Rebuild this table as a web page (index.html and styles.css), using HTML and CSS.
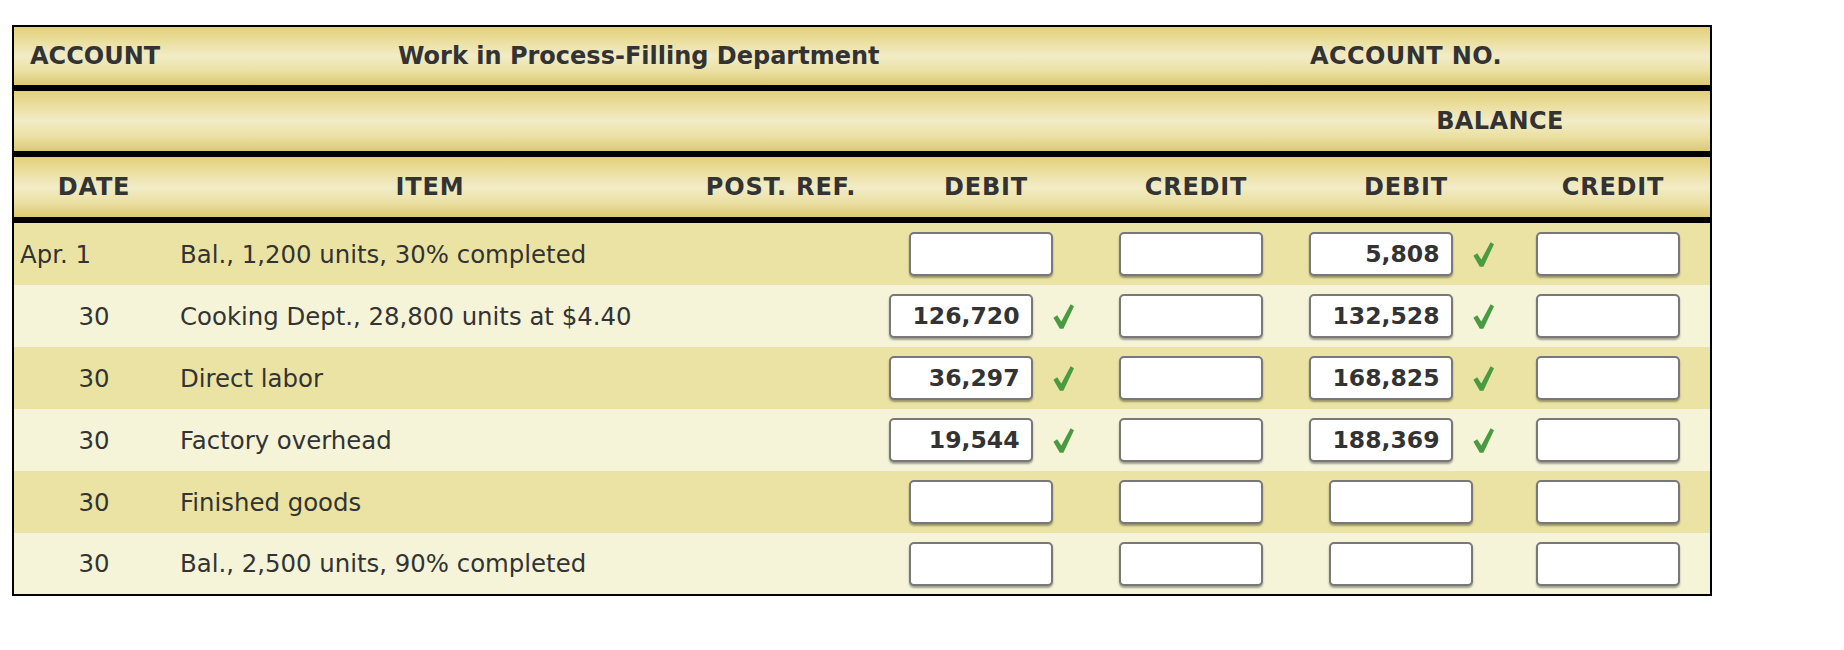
FILE: index.html
```html
<!DOCTYPE html>
<html lang="en">
<head>
<meta charset="utf-8">
<title>Work in Process-Filling Department</title>
<link rel="stylesheet" href="styles.css">
</head>
<body>
<div class="page">
  <div class="ledger">
    <div class="hrow hrow-account">
      <div class="hcell hcell-label">ACCOUNT</div>
      <div class="hcell hcell-title">Work in Process-Filling Department</div>
      <div class="hcell hcell-no caps">ACCOUNT NO.</div>
      <div class="hcell"></div>
    </div>
    <div class="hrow hrow-balance">
      <div class="hcell"></div>
      <div class="hcell hcell-balance caps">BALANCE</div>
    </div>
    <div class="hrow cols">
      <div class="hcell center colhead">DATE</div>
      <div class="hcell center colhead">ITEM</div>
      <div class="hcell center colhead">POST. REF.</div>
      <div class="hcell center colhead money">DEBIT</div>
      <div class="hcell center colhead money">CREDIT</div>
      <div class="hcell center colhead money">DEBIT</div>
      <div class="hcell center colhead money">CREDIT</div>
    </div>

    <div class="row cols dark">
      <div class="date date-first">Apr. 1</div>
      <div class="item">Bal., 1,200 units, 30% completed</div>
      <div class="ref"></div>
      <div class="amt"><div class="box"></div></div>
      <div class="amt"><div class="box"></div></div>
      <div class="amt"><div class="box">5,808</div><svg class="check" viewBox="0 0 21 25"><path d="M0.4 13.8 L4.2 11.3 L8.3 17.4 L17.6 0.3 L21 2.3 L10.4 24.7 L6.8 24.7 Z"/></svg></div>
      <div class="amt"><div class="box"></div></div>
    </div>
    <div class="row cols light">
      <div class="date">30</div>
      <div class="item">Cooking Dept., 28,800 units at $4.40</div>
      <div class="ref"></div>
      <div class="amt"><div class="box">126,720</div><svg class="check" viewBox="0 0 21 25"><path d="M0.4 13.8 L4.2 11.3 L8.3 17.4 L17.6 0.3 L21 2.3 L10.4 24.7 L6.8 24.7 Z"/></svg></div>
      <div class="amt"><div class="box"></div></div>
      <div class="amt"><div class="box">132,528</div><svg class="check" viewBox="0 0 21 25"><path d="M0.4 13.8 L4.2 11.3 L8.3 17.4 L17.6 0.3 L21 2.3 L10.4 24.7 L6.8 24.7 Z"/></svg></div>
      <div class="amt"><div class="box"></div></div>
    </div>
    <div class="row cols dark">
      <div class="date">30</div>
      <div class="item">Direct labor</div>
      <div class="ref"></div>
      <div class="amt"><div class="box">36,297</div><svg class="check" viewBox="0 0 21 25"><path d="M0.4 13.8 L4.2 11.3 L8.3 17.4 L17.6 0.3 L21 2.3 L10.4 24.7 L6.8 24.7 Z"/></svg></div>
      <div class="amt"><div class="box"></div></div>
      <div class="amt"><div class="box">168,825</div><svg class="check" viewBox="0 0 21 25"><path d="M0.4 13.8 L4.2 11.3 L8.3 17.4 L17.6 0.3 L21 2.3 L10.4 24.7 L6.8 24.7 Z"/></svg></div>
      <div class="amt"><div class="box"></div></div>
    </div>
    <div class="row cols light">
      <div class="date">30</div>
      <div class="item">Factory overhead</div>
      <div class="ref"></div>
      <div class="amt"><div class="box">19,544</div><svg class="check" viewBox="0 0 21 25"><path d="M0.4 13.8 L4.2 11.3 L8.3 17.4 L17.6 0.3 L21 2.3 L10.4 24.7 L6.8 24.7 Z"/></svg></div>
      <div class="amt"><div class="box"></div></div>
      <div class="amt"><div class="box">188,369</div><svg class="check" viewBox="0 0 21 25"><path d="M0.4 13.8 L4.2 11.3 L8.3 17.4 L17.6 0.3 L21 2.3 L10.4 24.7 L6.8 24.7 Z"/></svg></div>
      <div class="amt"><div class="box"></div></div>
    </div>
    <div class="row cols dark">
      <div class="date">30</div>
      <div class="item">Finished goods</div>
      <div class="ref"></div>
      <div class="amt"><div class="box"></div></div>
      <div class="amt"><div class="box"></div></div>
      <div class="amt"><div class="box"></div></div>
      <div class="amt"><div class="box"></div></div>
    </div>
    <div class="row cols light last">
      <div class="date">30</div>
      <div class="item">Bal., 2,500 units, 90% completed</div>
      <div class="ref"></div>
      <div class="amt"><div class="box"></div></div>
      <div class="amt"><div class="box"></div></div>
      <div class="amt"><div class="box"></div></div>
      <div class="amt"><div class="box"></div></div>
    </div>
  </div>
</div>
</body>
</html>
```

FILE: styles.css
```css
html, body {
  margin: 0;
  padding: 0;
  background: #ffffff;
}

.page {
  padding: 25px 0 0 12px;
  font-family: "DejaVu Sans", Verdana, sans-serif;
  color: #333333;
}

.ledger {
  box-sizing: border-box;
  width: 1700px;
  border: 2px solid #000000;
  background: #f5f5d9;
}

.hrow {
  display: grid;
  align-items: center;
  border-bottom: 6px solid #000000;
  background: linear-gradient(to bottom,
    #e2d07a 0%,
    #eadd9b 22%,
    #f2ecc7 50%,
    #ebe0a3 76%,
    #dcc973 100%);
  font-weight: bold;
  font-size: 24px;
  color: #333333;
}

.hrow-account {
  height: 58px;
  grid-template-columns: 383px 899px 210px 204px;
}

.hrow-balance {
  height: 60px;
  grid-template-columns: 1282px 414px;
}

.hrow.cols {
  height: 60px;
}

.cols {
  display: grid;
  grid-template-columns: 160px 512px 190px 210px 210px 210px 204px;
}

.hcell {
  white-space: nowrap;
}

.caps {
  letter-spacing: 0.4px;
}

.colhead {
  letter-spacing: 0.8px;
}

.hcell-label {
  padding-left: 16px;
}

.hcell-title {
  padding-left: 1px;
}

.hcell-no {
  text-align: center;
  padding-left: 10px;
}

.hcell-balance {
  text-align: center;
  padding-right: 6px;
}

.center {
  text-align: center;
}

.money {
  padding-left: 10px;
}

.row {
  height: 62px;
  align-items: center;
  font-size: 24.4px;
}

.row.last {
  height: 61px;
}

.dark {
  background: #ebe3a4;
}

.light {
  background: #f5f4d8;
}

.date {
  text-align: center;
  white-space: nowrap;
}

.date-first {
  text-align: left;
  padding-left: 6px;
}

.item {
  padding-left: 6px;
  white-space: nowrap;
}

.amt {
  display: flex;
  align-items: center;
  justify-content: center;
}

.box {
  box-sizing: border-box;
  width: 144px;
  height: 44px;
  background: #ffffff;
  border: 2px solid #787878;
  border-radius: 5px;
  box-shadow: 0 2px 2px rgba(0, 0, 0, 0.35);
  font-weight: bold;
  font-size: 23.5px;
  line-height: 40px;
  text-align: right;
  padding-right: 11px;
  color: #333333;
}

.check {
  width: 21px;
  height: 25px;
  margin-left: 20px;
  fill: #4a9a42;
  flex: none;
}
```
